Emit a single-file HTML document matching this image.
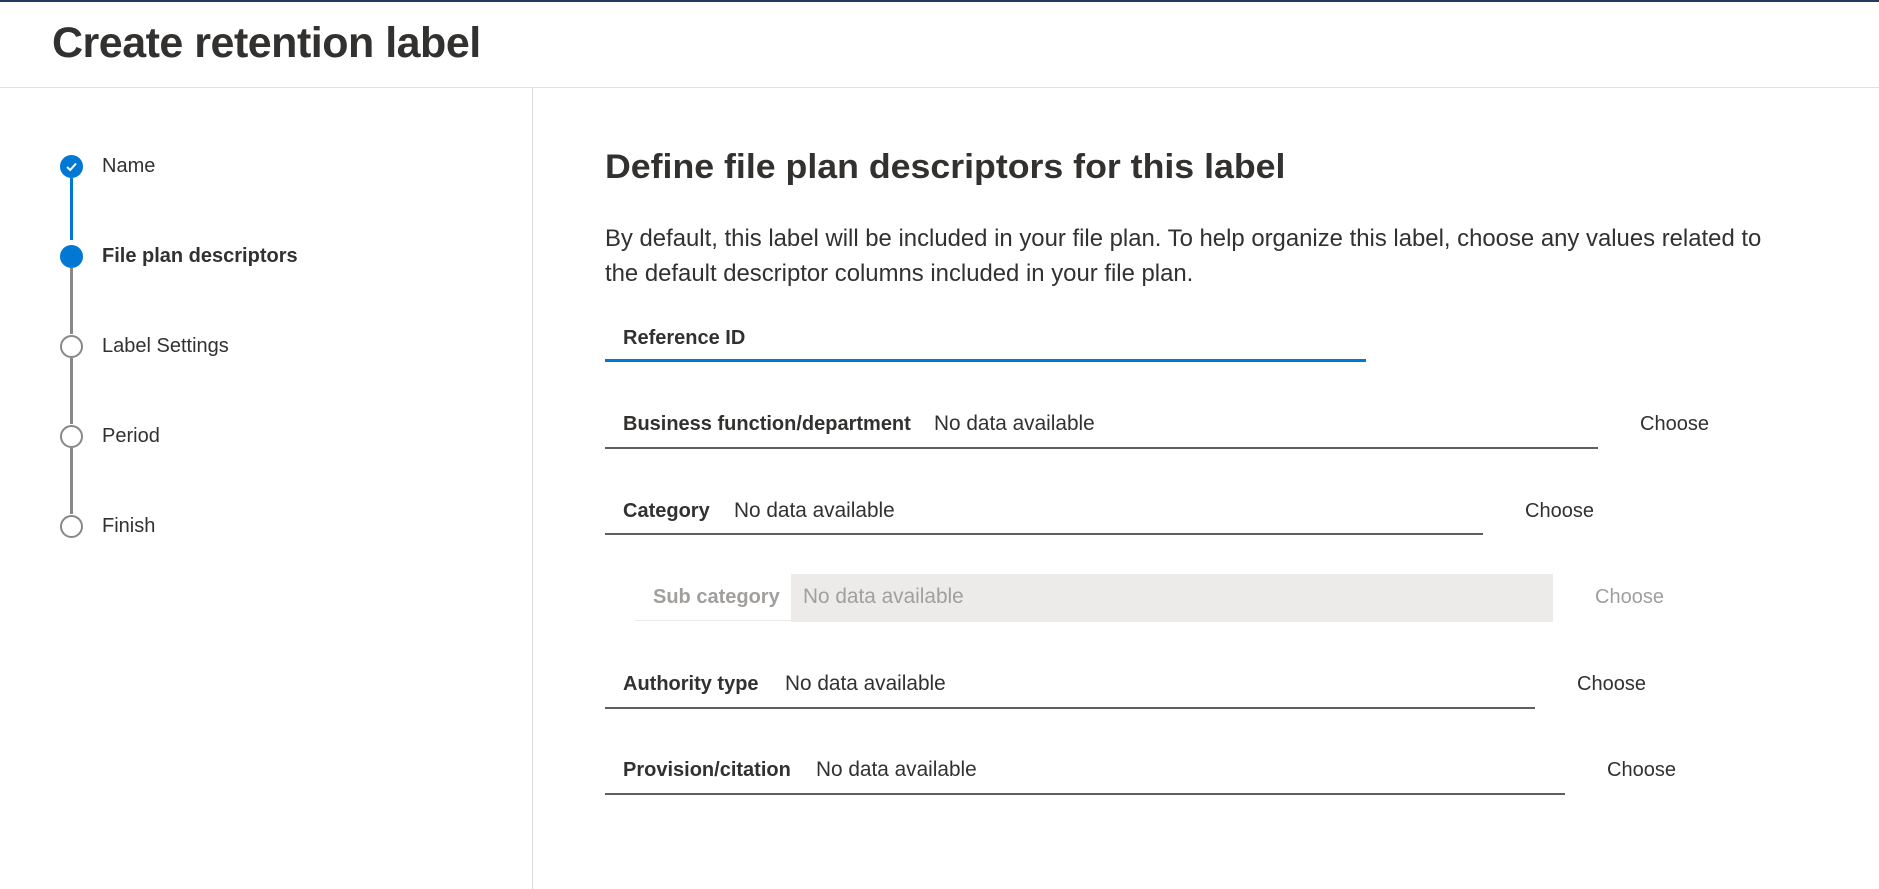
<!DOCTYPE html>
<html><head><meta charset="utf-8"><style>
*{margin:0;padding:0;box-sizing:border-box}
body{width:1879px;height:889px;background:#fff;position:relative;overflow:hidden;font-family:"Segoe UI","Liberation Sans",sans-serif;color:#323130}
.a{position:absolute;white-space:nowrap}
.topbar{left:0;top:0;width:1879px;height:2px;background:#243a5e}
.hdr{left:0;top:87px;width:1879px;height:1px;background:#e1dfdd}
.vdiv{left:532px;top:88px;width:1px;height:801px;background:#e1dfdd}
.title{left:52px;top:19px;font-size:43px;font-weight:bold;letter-spacing:-0.5px}
.circ{width:23px;height:23px;border-radius:50%;border:2px solid #8a8886;background:#fff}
.line{width:3px;background:#8a8886}
.step{font-size:20px;left:102px}
.lbl{font-size:20px;font-weight:bold}
.val{font-size:20.8px}
.ch{font-size:20px}
.ul{height:2px;background:#605e5c;left:605px}
</style></head><body>
<div class="a topbar"></div>
<div class="a title">Create retention label</div>
<div class="a hdr"></div>
<div class="a vdiv"></div>

<div class="a line" style="left:70px;top:178px;height:62px;background:#0078d4"></div>
<div class="a line" style="left:70px;top:268px;height:66px"></div>
<div class="a line" style="left:70px;top:358px;height:66px"></div>
<div class="a line" style="left:70px;top:448px;height:66px"></div>
<div class="a circ" style="left:60px;top:155px;background:#0078d4;border-color:#0078d4"><svg width="19" height="19" viewBox="0 0 19 19" style="position:absolute;left:0;top:0"><path d="M5 10 L8.2 13 L14 6.5" fill="none" stroke="#fff" stroke-width="2"/></svg></div>
<div class="a circ" style="left:60px;top:245px;background:#0078d4;border-color:#0078d4"></div>
<div class="a circ" style="left:60px;top:335px"></div>
<div class="a circ" style="left:60px;top:425px"></div>
<div class="a circ" style="left:60px;top:515px"></div>
<div class="a step" style="top:155px">Name</div>
<div class="a step" style="top:245px;font-weight:bold">File plan descriptors</div>
<div class="a step" style="top:335px">Label Settings</div>
<div class="a step" style="top:425px">Period</div>
<div class="a step" style="top:515px">Finish</div>

<div class="a" style="left:605px;top:148px;font-size:34px;font-weight:bold;transform-origin:left center;transform:scaleX(1.05)">Define file plan descriptors for this label</div>
<div class="a" style="left:605px;top:221px;font-size:23.9px;line-height:35px;white-space:normal;width:1270px">By default, this label will be included in your file plan. To help organize this label, choose any values related to<br>the default descriptor columns included in your file plan.</div>

<div class="a lbl" style="left:623px;top:327px">Reference ID</div>
<div class="a" style="left:605px;top:359px;width:761px;height:3px;background:#0078d4"></div>

<div class="a lbl" style="left:623px;top:413px">Business function/department</div>
<div class="a val" style="left:934px;top:412px">No data available</div>
<div class="a ul" style="top:447px;width:993px"></div>
<div class="a ch" style="left:1640px;top:413px">Choose</div>

<div class="a lbl" style="left:623px;top:500px">Category</div>
<div class="a val" style="left:734px;top:499px">No data available</div>
<div class="a ul" style="top:533px;width:878px"></div>
<div class="a ch" style="left:1525px;top:500px">Choose</div>

<div class="a" style="left:635px;top:620px;width:156px;height:1px;background:#edebe9"></div>
<div class="a" style="left:791px;top:574px;width:762px;height:48px;background:#edebe9"></div>
<div class="a lbl" style="left:653px;top:586px;color:#a19f9d">Sub category</div>
<div class="a val" style="left:803px;top:585px;color:#a19f9d">No data available</div>
<div class="a ch" style="left:1595px;top:586px;color:#a19f9d">Choose</div>

<div class="a lbl" style="left:623px;top:673px">Authority type</div>
<div class="a val" style="left:785px;top:672px">No data available</div>
<div class="a ul" style="top:707px;width:930px"></div>
<div class="a ch" style="left:1577px;top:673px">Choose</div>

<div class="a lbl" style="left:623px;top:759px">Provision/citation</div>
<div class="a val" style="left:816px;top:758px">No data available</div>
<div class="a ul" style="top:793px;width:960px"></div>
<div class="a ch" style="left:1607px;top:759px">Choose</div>
</body></html>
